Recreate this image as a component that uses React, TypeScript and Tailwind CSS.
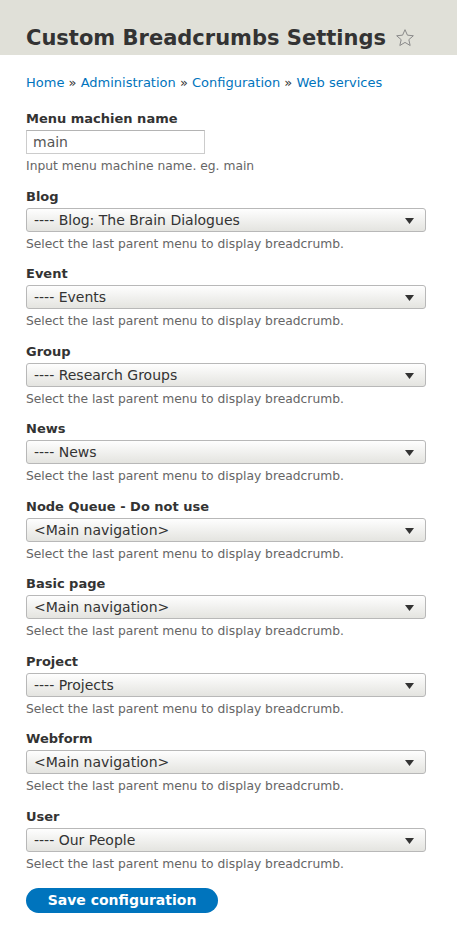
import React from "react";

const fields: { label: string; value: string }[] = [
  { label: "Blog", value: "---- Blog: The Brain Dialogues" },
  { label: "Event", value: "---- Events" },
  { label: "Group", value: "---- Research Groups" },
  { label: "News", value: "---- News" },
  { label: "Node Queue - Do not use", value: "<Main navigation>" },
  { label: "Basic page", value: "<Main navigation>" },
  { label: "Project", value: "---- Projects" },
  { label: "Webform", value: "<Main navigation>" },
  { label: "User", value: "---- Our People" },
];

function Select({ value }: { value: string }) {
  return (
    <div className="relative flex h-[24px] w-[400px] items-center rounded-[3px] border border-[#b8b8b8] bg-gradient-to-b from-[#fefefe] to-[#e4e4e0] pl-[7px] text-[14px] leading-none text-[#333]">
      <span>{value}</span>
      <svg className="absolute right-[11px] top-[9px]" width="9" height="6" viewBox="0 0 9 6">
        <polygon points="0,0 9,0 4.5,6" fill="#333" />
      </svg>
    </div>
  );
}

export default function App() {
  return (
    <div className="min-h-[930px] bg-white font-['DejaVu_Sans',sans-serif] text-[#333]">
      <div className="h-[55px] bg-[#e0e0d8] px-[26px] pt-[23px]">
        <h1 className="flex items-center whitespace-nowrap text-[21px] font-bold leading-[30px] text-[#333]">
          Custom Breadcrumbs Settings
          <svg className="ml-[9px]" width="20" height="20" viewBox="0 0 24 24">
            <polygon
              points="12,2 14.9,8.6 22,9.3 16.6,14 18.2,21 12,17.3 5.8,21 7.4,14 2,9.3 9.1,8.6"
              fill="none"
              stroke="#8a8a8a"
              strokeWidth="1.2"
              strokeLinejoin="round"
            />
          </svg>
        </h1>
      </div>
      <div className="px-[26px]">
        <div className="mt-[19px] text-[13px] leading-[18px] text-[#0074bd]">
          <a>Home</a> <span className="text-[#333]">»</span> <a>Administration</a>{" "}
          <span className="text-[#333]">»</span> <a>Configuration</a>{" "}
          <span className="text-[#333]">»</span> <a>Web services</a>
        </div>
        <div className="mt-[18px]">
          <div className="text-[13px] font-bold leading-[18px]">Menu machien name</div>
          <div className="mt-[2px] flex h-[24px] w-[179px] items-center border border-[#ccc] border-t-[#b4b4b4] bg-[#fff] pl-[6px] text-[14px] text-[#555]">
            main
          </div>
          <div className="mt-[4px] text-[12.3px] leading-[17.5px] text-[#666]">Input menu machine name. eg. main</div>
        </div>
        {fields.map((f) => (
          <div key={f.label} className="mt-[12px]">
            <div className="text-[13px] font-bold leading-[18px]">{f.label}</div>
            <div className="mt-[2px]">
              <Select value={f.value} />
            </div>
            <div className="mt-[4px] text-[12.3px] leading-[17.5px] text-[#666]">
              Select the last parent menu to display breadcrumb.
            </div>
          </div>
        ))}
        <button className="mt-[15px] flex h-[25px] w-[192px] items-center justify-center rounded-full bg-[#0074bd] text-[14px] font-bold text-white">
          Save configuration
        </button>
      </div>
    </div>
  );
}
